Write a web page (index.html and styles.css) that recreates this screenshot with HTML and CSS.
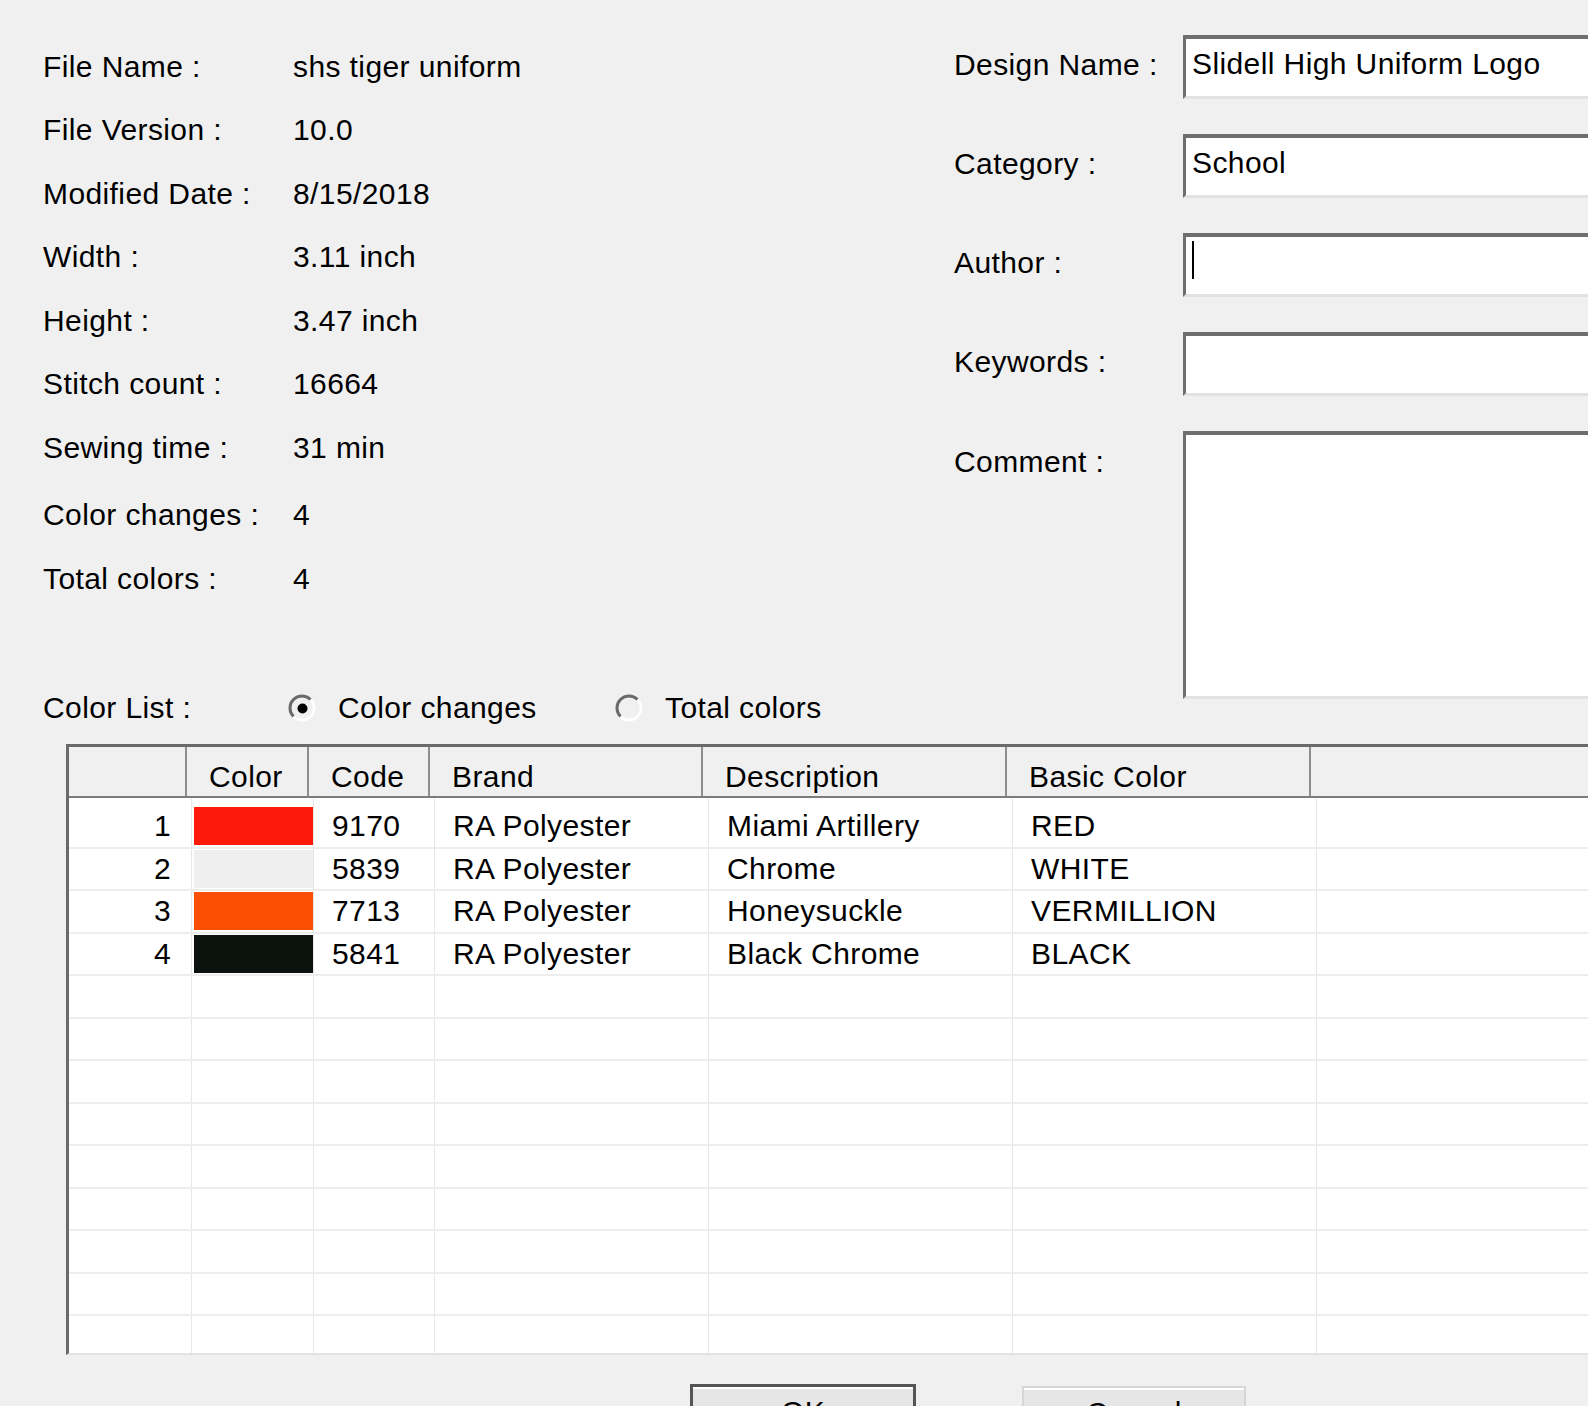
FILE: index.html
```html
<!DOCTYPE html>
<html>
<head>
<meta charset="utf-8">
<link rel="stylesheet" href="styles.css">
</head>
<body>
<div class="dialog">
  <div class="top">
    <div class="left">
      <div class="info">
        <div class="info-row"><span class="info-label">File Name :</span><span>shs tiger uniform</span></div>
        <div class="info-row"><span class="info-label">File Version :</span><span>10.0</span></div>
        <div class="info-row"><span class="info-label">Modified Date :</span><span>8/15/2018</span></div>
        <div class="info-row"><span class="info-label">Width :</span><span>3.11 inch</span></div>
        <div class="info-row"><span class="info-label">Height :</span><span>3.47 inch</span></div>
        <div class="info-row"><span class="info-label">Stitch count :</span><span>16664</span></div>
        <div class="info-row"><span class="info-label">Sewing time :</span><span>31 min</span></div>
        <div class="info-row info-row-gap"><span class="info-label">Color changes :</span><span>4</span></div>
        <div class="info-row"><span class="info-label">Total colors :</span><span>4</span></div>
      </div>
      <div class="color-list">
        <span class="cl-label">Color List :</span>
        <label class="opt">
          <svg class="radio" width="30" height="30" viewBox="0 0 30 30">
            <path d="M23.5 6.5 A12 12 0 0 1 6.5 23.5" fill="none" stroke="#ffffff" stroke-width="2.5"/>
            <path d="M6.5 23.5 A12 12 0 0 1 23.5 6.5" fill="none" stroke="#6a6a6a" stroke-width="3"/>
            <circle cx="15.5" cy="15.5" r="5" fill="#000"/>
          </svg>
          <span>Color changes</span>
        </label>
        <label class="opt">
          <svg class="radio" width="30" height="30" viewBox="0 0 30 30">
            <path d="M23.5 6.5 A12 12 0 0 1 6.5 23.5" fill="none" stroke="#ffffff" stroke-width="2.5"/>
            <path d="M6.5 23.5 A12 12 0 0 1 23.5 6.5" fill="none" stroke="#6a6a6a" stroke-width="3"/>
          </svg>
          <span>Total colors</span>
        </label>
      </div>
    </div>
    <div class="meta">
      <div class="field"><span class="field-label">Design Name :</span><div class="box"><span>Slidell High Uniform Logo</span></div></div>
      <div class="field"><span class="field-label">Category :</span><div class="box"><span>School</span></div></div>
      <div class="field"><span class="field-label">Author :</span><div class="box box-caret"><span class="caret"></span></div></div>
      <div class="field"><span class="field-label">Keywords :</span><div class="box"></div></div>
      <div class="field field-comment"><span class="field-label">Comment :</span><div class="box box-comment"></div></div>
    </div>
  </div>

  <div class="grid">
    <div class="head">
      <div class="hc c0"></div>
      <div class="hc c1">Color</div>
      <div class="hc c2">Code</div>
      <div class="hc c3">Brand</div>
      <div class="hc c4">Description</div>
      <div class="hc c5">Basic Color</div>
      <div class="hc c6 last"></div>
    </div>
    <div class="body">
      <div class="row spacer"><div class="bc b0"></div><div class="bc b1"></div><div class="bc b2"></div><div class="bc b3"></div><div class="bc b4"></div><div class="bc b5"></div><div class="bc b6"></div></div>
      <div class="row"><div class="bc b0 num">1</div><div class="bc b1"><span class="sw sw-red"></span></div><div class="bc b2">9170</div><div class="bc b3">RA Polyester</div><div class="bc b4">Miami Artillery</div><div class="bc b5">RED</div><div class="bc b6"></div></div>
      <div class="row"><div class="bc b0 num">2</div><div class="bc b1"><span class="sw sw-white"></span></div><div class="bc b2">5839</div><div class="bc b3">RA Polyester</div><div class="bc b4">Chrome</div><div class="bc b5">WHITE</div><div class="bc b6"></div></div>
      <div class="row"><div class="bc b0 num">3</div><div class="bc b1"><span class="sw sw-orange"></span></div><div class="bc b2">7713</div><div class="bc b3">RA Polyester</div><div class="bc b4">Honeysuckle</div><div class="bc b5">VERMILLION</div><div class="bc b6"></div></div>
      <div class="row"><div class="bc b0 num">4</div><div class="bc b1"><span class="sw sw-black"></span></div><div class="bc b2">5841</div><div class="bc b3">RA Polyester</div><div class="bc b4">Black Chrome</div><div class="bc b5">BLACK</div><div class="bc b6"></div></div>
      <div class="row"><div class="bc b0"></div><div class="bc b1"></div><div class="bc b2"></div><div class="bc b3"></div><div class="bc b4"></div><div class="bc b5"></div><div class="bc b6"></div></div>
      <div class="row"><div class="bc b0"></div><div class="bc b1"></div><div class="bc b2"></div><div class="bc b3"></div><div class="bc b4"></div><div class="bc b5"></div><div class="bc b6"></div></div>
      <div class="row"><div class="bc b0"></div><div class="bc b1"></div><div class="bc b2"></div><div class="bc b3"></div><div class="bc b4"></div><div class="bc b5"></div><div class="bc b6"></div></div>
      <div class="row"><div class="bc b0"></div><div class="bc b1"></div><div class="bc b2"></div><div class="bc b3"></div><div class="bc b4"></div><div class="bc b5"></div><div class="bc b6"></div></div>
      <div class="row"><div class="bc b0"></div><div class="bc b1"></div><div class="bc b2"></div><div class="bc b3"></div><div class="bc b4"></div><div class="bc b5"></div><div class="bc b6"></div></div>
      <div class="row"><div class="bc b0"></div><div class="bc b1"></div><div class="bc b2"></div><div class="bc b3"></div><div class="bc b4"></div><div class="bc b5"></div><div class="bc b6"></div></div>
      <div class="row"><div class="bc b0"></div><div class="bc b1"></div><div class="bc b2"></div><div class="bc b3"></div><div class="bc b4"></div><div class="bc b5"></div><div class="bc b6"></div></div>
      <div class="row"><div class="bc b0"></div><div class="bc b1"></div><div class="bc b2"></div><div class="bc b3"></div><div class="bc b4"></div><div class="bc b5"></div><div class="bc b6"></div></div>
      <div class="row"><div class="bc b0"></div><div class="bc b1"></div><div class="bc b2"></div><div class="bc b3"></div><div class="bc b4"></div><div class="bc b5"></div><div class="bc b6"></div></div>
    </div>
  </div>

  <div class="buttons">
    <div class="btn btn-ok">OK</div>
    <div class="btn btn-cancel">Cancel</div>
  </div>
</div>
</body>
</html>
```

FILE: styles.css
```css
html, body {
  margin: 0;
  padding: 0;
}
body {
  width: 1588px;
  height: 1406px;
  overflow: hidden;
  background: #f0f0f0;
  color: #000;
  font-family: "Liberation Sans", Arial, sans-serif;
  font-size: 30px;
  letter-spacing: 0.4px;
}
.dialog {
  width: 1588px;
}
.top {
  display: flex;
  align-items: flex-start;
}
.left {
  width: 954px;
  flex: none;
  box-sizing: border-box;
  padding-left: 43px;
  padding-top: 35px;
}
.info-row {
  display: flex;
  align-items: center;
  height: 63.5px;
  white-space: nowrap;
}
.info-row-gap {
  margin-top: 4px;
}
.info-label {
  width: 250px;
  flex: none;
}
.color-list {
  display: flex;
  align-items: center;
  height: 40px;
  margin-top: 77.5px;
  white-space: nowrap;
}
.cl-label {
  width: 244px;
  flex: none;
}
.opt {
  display: flex;
  align-items: center;
  gap: 21px;
  width: 327px;
  flex: none;
}
.radio {
  display: block;
  flex: none;
}

.meta {
  flex: 1;
  padding-top: 35px;
}
.field {
  display: flex;
  align-items: center;
  margin-bottom: 35px;
}
.field-label {
  width: 229px;
  flex: none;
  white-space: nowrap;
  margin-top: -4px;
}
.box {
  flex: 1;
  height: 64px;
  box-sizing: border-box;
  background: #fff;
  border-top: 4px solid #6e6e6e;
  border-left: 3px solid #6e6e6e;
  border-bottom: 3px solid #e2e2e2;
  padding-left: 6px;
  display: flex;
  align-items: center;
  white-space: nowrap;
}
.box span {
  margin-top: -8px;
}
.box-caret {
  align-items: flex-start;
}
.box .caret {
  display: block;
  width: 2px;
  height: 38px;
  background: #000;
  margin-top: 4px;
}
.field-comment {
  align-items: flex-start;
  margin-bottom: 0;
}
.field-comment .field-label {
  margin-top: 14px;
}
.box-comment {
  height: 268px;
}

.grid {
  margin-left: 66px;
  margin-top: 16px;
  height: 611px;
  box-sizing: border-box;
  border-top: 3px solid #6a6a6a;
  border-left: 3px solid #6a6a6a;
  border-bottom: 2px solid #e2e2e2;
  background: #fff;
  overflow: hidden;
}
.head {
  display: flex;
  height: 51px;
  box-sizing: border-box;
  background: #f0f0f0;
  border-bottom: 2px solid #7c7c7c;
}
.hc {
  flex: none;
  box-sizing: border-box;
  border-right: 2px solid #8e8e8e;
  padding-left: 22px;
  padding-top: 10px;
  display: flex;
  align-items: center;
  white-space: nowrap;
}
.hc.c0 { width: 118px; }
.hc.c1 { width: 122px; }
.hc.c2 { width: 121px; }
.hc.c3 { width: 273px; }
.hc.c4 { width: 304px; }
.hc.c5 { width: 304px; }
.hc.last { flex: 1; border-right: none; }

.row {
  display: flex;
  height: 42.5px;
  box-sizing: border-box;
  border-bottom: 2px solid #ededed;
}
.row.spacer {
  height: 8px;
  border-bottom: none;
}
.bc {
  flex: none;
  box-sizing: border-box;
  border-right: 1px solid #e6e6e6;
  display: flex;
  align-items: center;
  padding-left: 18px;
  white-space: nowrap;
}
.bc.b0 { width: 123px; padding-left: 0; padding-right: 20px; justify-content: flex-end; }
.bc.b1 { width: 122px; padding-left: 2px; }
.bc.b2 { width: 121px; }
.bc.b3 { width: 274px; }
.bc.b4 { width: 304px; }
.bc.b5 { width: 304px; }
.bc.b6 { flex: 1; border-right: none; }

.sw {
  display: block;
  width: 119px;
  height: 38px;
}
.sw-red { background: #fe1a0a; }
.sw-white { background: #efefef; }
.sw-orange { background: #fb4f06; }
.sw-black { background: #0b110d; }

.buttons {
  display: flex;
  margin-top: 29px;
}
.btn {
  flex: none;
  height: 64px;
  box-sizing: border-box;
  display: flex;
  justify-content: center;
  align-items: flex-start;
  line-height: 30px;
  background: #e6e6e6;
}
.btn-ok {
  margin-left: 690px;
  width: 226px;
  border: 3px solid #555;
  box-shadow: inset 0 2px 0 #ffffff;
  padding-top: 10px;
}
.btn-cancel {
  margin-left: 106px;
  width: 224px;
  border: 2px solid #d6d6d6;
  box-shadow: inset 0 2px 0 #ffffff;
  margin-top: 2px;
  padding-top: 10px;
}
```
